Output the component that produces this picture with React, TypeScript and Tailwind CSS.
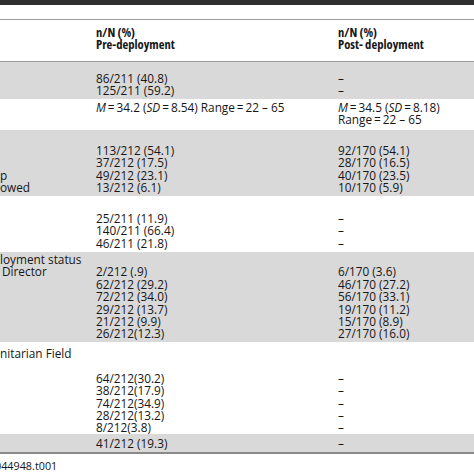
const font = { fontFamily: '"Open Sans", "Liberation Sans", sans-serif' };

type Band = {
  gray: boolean;
  h: string;
  pt: string;
  rows: [React.ReactNode, React.ReactNode, React.ReactNode][];
};

const dash = "–";

const bands: Band[] = [
  {
    gray: true,
    h: "h-[37px]",
    pt: "pt-[10px]",
    rows: [
      ["", "86/211 (40.8)", dash],
      ["", "125/211 (59.2)", dash],
    ],
  },
  {
    gray: false,
    h: "h-[31px]",
    pt: "pt-[2px]",
    rows: [
      [
        "",
        <span key="m">
          <i>M</i>{"\u2009=\u200934.2 ("}<i>SD</i>{"\u2009=\u20098.54) Range\u2009=\u200922 \u2013 65"}
        </span>,
        <span key="m2">
          <i>M</i>{"\u2009=\u200934.5 ("}<i>SD</i>{"\u2009=\u20098.18)"}
        </span>,
      ],
      ["", "", "Range\u2009=\u200922 \u2013 65"],
    ],
  },
  {
    gray: true,
    h: "h-[66px]",
    pt: "pt-[14px]",
    rows: [
      ["", "113/212 (54.1)", "92/170 (54.1)"],
      ["", "37/212 (17.5)", "28/170 (16.5)"],
      ["p", "49/212 (23.1)", "40/170 (23.5)"],
      ["owed", "13/212 (6.1)", "10/170 (5.9)"],
    ],
  },
  {
    gray: false,
    h: "h-[56px]",
    pt: "pt-[16px]",
    rows: [
      ["", "25/211 (11.9)", dash],
      ["", "140/211 (66.4)", dash],
      ["", "46/211 (21.8)", dash],
    ],
  },
  {
    gray: true,
    h: "h-[90px]",
    pt: "pt-[1px]",
    rows: [
      ["loyment status", "", ""],
      [<span key="d" className="pl-[2px]">Director</span>, "2/212 (.9)", "6/170 (3.6)"],
      ["", "62/212 (29.2)", "46/170 (27.2)"],
      ["", "72/212 (34.0)", "56/170 (33.1)"],
      ["", "29/212 (13.7)", "19/170 (11.2)"],
      ["", "21/212 (9.9)", "15/170 (8.9)"],
      ["", "26/212(12.3)", "27/170 (16.0)"],
    ],
  },
  {
    gray: false,
    h: "h-[92px]",
    pt: "pt-[5px]",
    rows: [
      ["nitarian Field", "", ""],
      ["", "", ""],
      ["", "64/212(30.2)", dash],
      ["", "38/212(17.9)", dash],
      ["", "74/212(34.9)", dash],
      ["", "28/212(13.2)", dash],
      ["", "8/212(3.8)", dash],
    ],
  },
  {
    gray: true,
    h: "h-[18px]",
    pt: "pt-[3px]",
    rows: [["", "41/212 (19.3)", dash]],
  },
];

export default function App() {
  return (
    <div className="w-[474px] h-[474px] overflow-hidden bg-white text-[#161616] font-stretch-[90%]" style={font}>
      <div className="h-[5px] bg-[#2f2f2f]" />
      <div className="h-[15px] border-b border-[#9c9c9c]" />
      <div className="h-[42px] border-b border-[#9c9c9c] grid grid-cols-[96px_242px_1fr] pt-[7px] text-[12.6px] font-bold leading-[11.5px] font-stretch-[85%]">
        <div />
        <div>
          <div>n/N (%)</div>
          <div>Pre-deployment</div>
        </div>
        <div>
          <div>n/N (%)</div>
          <div>Post- deployment</div>
        </div>
      </div>
      {bands.map((b, i) => (
        <div
          key={i}
          className={`${b.h} ${b.pt} ${b.gray ? "bg-[#d9d9d9]" : "bg-white"} text-[11.8px] leading-[12.4px]`}
        >
          {b.rows.map((r, j) => (
            <div key={j} className="grid grid-cols-[96px_242px_1fr] h-[12.4px] whitespace-nowrap">
              <div>{r[0]}</div>
              <div>{r[1]}</div>
              <div>{r[2]}</div>
            </div>
          ))}
        </div>
      ))}
      <div className="h-[2px] bg-[#8a8a8a]" />
      <div className="pt-[6px] text-[10.8px] leading-[12px] overflow-hidden whitespace-nowrap">
        <span className="-ml-[5px] inline-block">044948.t001</span>
      </div>
    </div>
  );
}
